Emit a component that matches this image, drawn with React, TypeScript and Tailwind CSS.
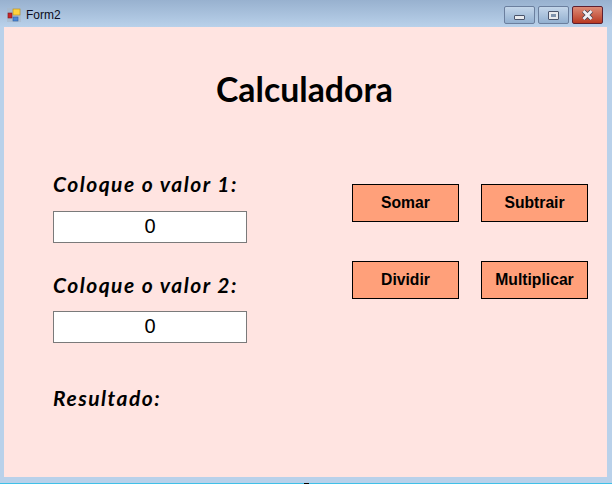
export default function App() {
  const label = "text-[21px] leading-[28px] font-bold italic text-black tracking-[1.5px] [font-family:'Lato',sans-serif]";
  const input = "w-[194px] h-[32px] pb-[2px] bg-white border border-[#7a7a7a] flex items-center justify-center text-[20px] text-black [font-family:'Liberation_Sans',sans-serif]";
  const button = "w-[107px] h-[38px] bg-[#ffa07a] border border-black flex items-center justify-center text-[15.7px] font-bold text-black [font-family:'Liberation_Sans',sans-serif]";
  return (
    <div className="w-[612px] h-[484px] flex flex-col bg-[#b9d1ea] overflow-hidden">
      <div className="h-[27px] shrink-0 flex items-start justify-between bg-gradient-to-b from-[#98b1cf] to-[#b9d1ea] pl-[7px] pr-[9px]">
        <div className="flex items-center gap-[5px] h-[26px] mt-[2px]">
          <svg width="14" height="14" viewBox="0 0 14 14">
            <rect x="0" y="0" width="14" height="14" fill="#a9b8c8" opacity="0.6" />
            <rect x="1" y="5" width="4" height="5" fill="#c8242a" stroke="#7c1c1c" strokeWidth="0.6" />
            <rect x="6" y="1" width="7" height="6" fill="#ffd23c" stroke="#b38b1c" strokeWidth="0.6" />
            <rect x="6" y="9" width="5" height="4" fill="#4a86d8" stroke="#2f5f9e" strokeWidth="0.6" />
          </svg>
          <span className="text-[12px] text-[#0b0b20] [font-family:'Liberation_Sans',sans-serif]">Form2</span>
        </div>
        <div className="flex items-start gap-[3px] mt-[6px]">
          <div className="w-[31px] h-[18px] rounded-[2px] border border-[#6b7f9e] bg-gradient-to-b from-[#c4d6ea] to-[#93b0d0] flex items-center justify-center">
            <div className="w-[11px] h-[5px] mt-[5px] bg-[#e8eaee] border border-[#49536a] rounded-[1px]" />
          </div>
          <div className="w-[31px] h-[18px] rounded-[2px] border border-[#6b7f9e] bg-gradient-to-b from-[#c4d6ea] to-[#93b0d0] flex items-center justify-center">
            <div className="w-[11px] h-[9px] bg-[#e8eaee] border border-[#49536a] rounded-[1px] flex items-center justify-center">
              <div className="w-[5px] h-[3px] bg-[#7f93ad]" />
            </div>
          </div>
          <div className="w-[31px] h-[18px] rounded-[2px] border border-[#5e2030] bg-gradient-to-b from-[#dc8a76] to-[#b8371f] flex items-center justify-center">
            <svg width="13" height="10" viewBox="0 0 13 10">
              <path d="M2.5 1 L10.5 9 M10.5 1 L2.5 9" stroke="#3c3c4c" strokeWidth="4.2" />
              <path d="M2.5 1 L10.5 9 M10.5 1 L2.5 9" stroke="#f0f0f4" strokeWidth="2.8" />
            </svg>
          </div>
        </div>
      </div>
      <div className="ml-[4px] w-[603px] h-[450px] shrink-0 bg-[#ffe4e1] flex flex-col">
        <div className="mt-[42px] ml-[212px] h-[40px] text-[33.8px] leading-[40px] font-bold text-black [font-family:'Lato',sans-serif]">Calculadora</div>
        <div className="flex mt-[61px]">
          <div className="ml-[49px] w-[299px] flex flex-col">
            <div className={label}>Coloque o valor 1:</div>
            <div className={`${input} mt-[13px]`}>0</div>
            <div className={`${label} mt-[28px]`}>Coloque o valor 2:</div>
            <div className={`${input} mt-[12px]`}>0</div>
            <div className={`${label} mt-[41px]`}>Resultado:</div>
          </div>
          <div className="grid grid-cols-[107px_107px] gap-x-[22px] gap-y-[39px] h-fit mt-[14px]">
            <div className={button}>Somar</div>
            <div className={button}>Subtrair</div>
            <div className={button}>Dividir</div>
            <div className={button}>Multiplicar</div>
          </div>
        </div>
      </div>
      <div className="flex-1 flex flex-col justify-end">
        <div className="h-[1px] bg-[#3fc0e8] flex justify-center">
          <div className="w-[5px] h-[1px] bg-black" />
        </div>
      </div>
    </div>
  );
}
